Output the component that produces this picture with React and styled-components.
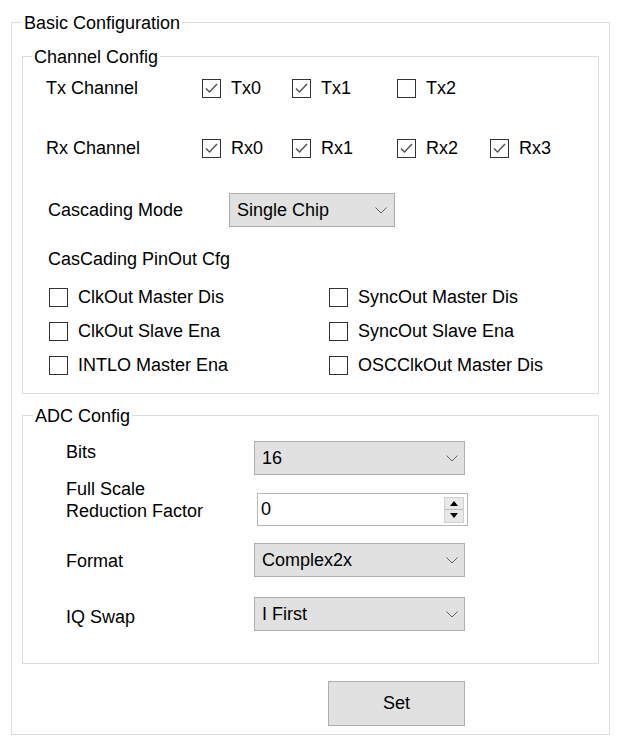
import React, { useState } from "react";
import styled, { createGlobalStyle } from "styled-components";

const GlobalStyle = createGlobalStyle`
  body {
    margin: 0;
    background: #fff;
    font-family: "Liberation Sans", Arial, sans-serif;
    font-size: 18px;
    color: #000;
  }
`;

const GroupBox = styled.section`
  display: flex;
  flex-direction: column;
  box-sizing: border-box;
  border: 1px solid #dcdcdc;
`;

const OuterGroup = styled(GroupBox)`
  width: 599px;
  margin: 22px 0 0 11px;
  padding: 0 10px 8px;
`;

const InnerGroup = styled(GroupBox)`
  margin-top: ${(p) => p.$top}px;
`;

const GroupTitle = styled.div`
  align-self: flex-start;
  margin: -11px 0 0 ${(p) => p.$indent}px;
  padding: 0 2px;
  background: #fff;
  line-height: 22px;
  white-space: nowrap;
`;

const ChannelBody = styled.div`
  display: flex;
  flex-direction: column;
  padding: 0 0 11px 23px;
`;

const ChannelRow = styled.div`
  display: grid;
  grid-template-columns: 156px 90px 105px 93px auto;
  align-items: center;
  height: 34px;
  margin-top: ${(p) => p.$top}px;
`;

const ModeRow = styled.div`
  display: flex;
  align-items: center;
  margin-top: 28px;
`;

const ModeLabel = styled.span`
  width: 183px;
  padding-left: 2px;
  box-sizing: border-box;
`;

const Heading = styled.div`
  margin-top: 21px;
  padding-left: 2px;
  line-height: 22px;
`;

const PinGrid = styled.div`
  display: grid;
  grid-template-columns: 280px auto;
  grid-auto-rows: 34px;
  align-items: center;
  margin-top: 10px;
  padding-left: 3px;
`;

const CheckLabel = styled.label`
  display: flex;
  align-items: center;
  gap: 10px;
  white-space: nowrap;
  cursor: default;
`;

const Box = styled.span`
  display: flex;
  width: 19px;
  height: 19px;
  box-sizing: border-box;
  border: 1px solid #333;
  background: #fff;
  flex-shrink: 0;
`;

const Select = styled.div`
  display: flex;
  align-items: center;
  justify-content: space-between;
  box-sizing: border-box;
  width: ${(p) => p.$width}px;
  height: 34px;
  padding: 0 ${(p) => p.$right}px 0 7px;
  background: #e1e1e1;
  border: 1px solid #adadad;
  white-space: nowrap;
`;

const AdcBody = styled.div`
  display: flex;
  flex-direction: column;
  padding: 0 0 32px 43px;
`;

const AdcRow = styled.div`
  display: flex;
  height: ${(p) => p.$height}px;
  margin-top: ${(p) => p.$top}px;
`;

const AdcLabel = styled.div`
  width: 188px;
  flex-shrink: 0;
  margin-top: ${(p) => p.$top}px;
  line-height: 22px;
`;

const SpinBox = styled.div`
  align-self: flex-end;
  display: flex;
  align-items: center;
  box-sizing: border-box;
  width: 211px;
  height: 33px;
  margin-left: 3px;
  padding: 0 3px 0 3px;
  border: 1px solid #b4b4b4;
  background: #fff;
`;

const SpinValue = styled.span`
  flex: 1;
`;

const SpinButtons = styled.div`
  display: flex;
  flex-direction: column;
  width: 20px;
  height: 26px;
  border: 1px solid #d0d0d0;
  box-sizing: border-box;
`;

const SpinButton = styled.div`
  flex: 1;
  display: flex;
  align-items: center;
  justify-content: center;
  background: #e8e8e8;
  & + & {
    border-top: 1px solid #bdbdbd;
  }
`;

const Footer = styled.div`
  display: flex;
  margin-top: 17px;
  padding-left: 306px;
`;

const Button = styled.button`
  width: 137px;
  height: 45px;
  padding: 0;
  font: inherit;
  color: #000;
  background: #e1e1e1;
  border: 1px solid #adadad;
`;

const Chevron = () => (
  <svg width="12" height="7" viewBox="0 0 12 7">
    <polyline points="0.5,0.5 6,6 11.5,0.5" fill="none" stroke="#606060" strokeWidth="1" />
  </svg>
);

const Arrow = ({ up }) => (
  <svg width="8" height="5" viewBox="0 0 8 5">
    <polygon points={up ? "0,5 8,5 4,0" : "0,0 8,0 4,5"} fill="#000" />
  </svg>
);

const Checkbox = ({ label, initial = false }) => {
  const [checked, setChecked] = useState(initial);
  return (
    <CheckLabel onClick={() => setChecked(!checked)}>
      <Box>
        {checked && (
          <svg width="17" height="17" viewBox="0 0 17 17">
            <polyline points="3,8.5 6.5,12 14,4" fill="none" stroke="#555" strokeWidth="1.5" />
          </svg>
        )}
      </Box>
      {label}
    </CheckLabel>
  );
};

const pinOptions = [
  "ClkOut Master Dis",
  "SyncOut Master Dis",
  "ClkOut Slave Ena",
  "SyncOut Slave Ena",
  "INTLO Master Ena",
  "OSCClkOut Master Dis",
];

const App = () => {
  return (
    <>
      <GlobalStyle />
      <OuterGroup>
        <GroupTitle $indent={0}>Basic Configuration</GroupTitle>

        <InnerGroup $top={22}>
          <GroupTitle $indent={9}>Channel Config</GroupTitle>
          <ChannelBody>
            <ChannelRow $top={3}>
              <span>Tx Channel</span>
              <Checkbox label="Tx0" initial />
              <Checkbox label="Tx1" initial />
              <Checkbox label="Tx2" />
            </ChannelRow>
            <ChannelRow $top={26}>
              <span>Rx Channel</span>
              <Checkbox label="Rx0" initial />
              <Checkbox label="Rx1" initial />
              <Checkbox label="Rx2" initial />
              <Checkbox label="Rx3" initial />
            </ChannelRow>
            <ModeRow>
              <ModeLabel>Cascading Mode</ModeLabel>
              <Select $width={166} $right={7}>
                Single Chip
                <Chevron />
              </Select>
            </ModeRow>
            <Heading>CasCading PinOut Cfg</Heading>
            <PinGrid>
              {pinOptions.map((name) => (
                <Checkbox key={name} label={name} />
              ))}
            </PinGrid>
          </ChannelBody>
        </InnerGroup>

        <InnerGroup $top={21}>
          <GroupTitle $indent={10}>ADC Config</GroupTitle>
          <AdcBody>
            <AdcRow $top={14} $height={34}>
              <AdcLabel $top={0}>Bits</AdcLabel>
              <Select $width={211} $right={6}>
                16
                <Chevron />
              </Select>
            </AdcRow>
            <AdcRow $top={3} $height={48}>
              <AdcLabel $top={0}>
                Full Scale
                <br />
                Reduction Factor
              </AdcLabel>
              <SpinBox>
                <SpinValue>0</SpinValue>
                <SpinButtons>
                  <SpinButton>
                    <Arrow up />
                  </SpinButton>
                  <SpinButton>
                    <Arrow />
                  </SpinButton>
                </SpinButtons>
              </SpinBox>
            </AdcRow>
            <AdcRow $top={17} $height={34}>
              <AdcLabel $top={7}>Format</AdcLabel>
              <Select $width={211} $right={6}>
                Complex2x
                <Chevron />
              </Select>
            </AdcRow>
            <AdcRow $top={20} $height={34}>
              <AdcLabel $top={9}>IQ Swap</AdcLabel>
              <Select $width={211} $right={6}>
                I First
                <Chevron />
              </Select>
            </AdcRow>
          </AdcBody>
        </InnerGroup>

        <Footer>
          <Button>Set</Button>
        </Footer>
      </OuterGroup>
    </>
  );
};

export default App;
